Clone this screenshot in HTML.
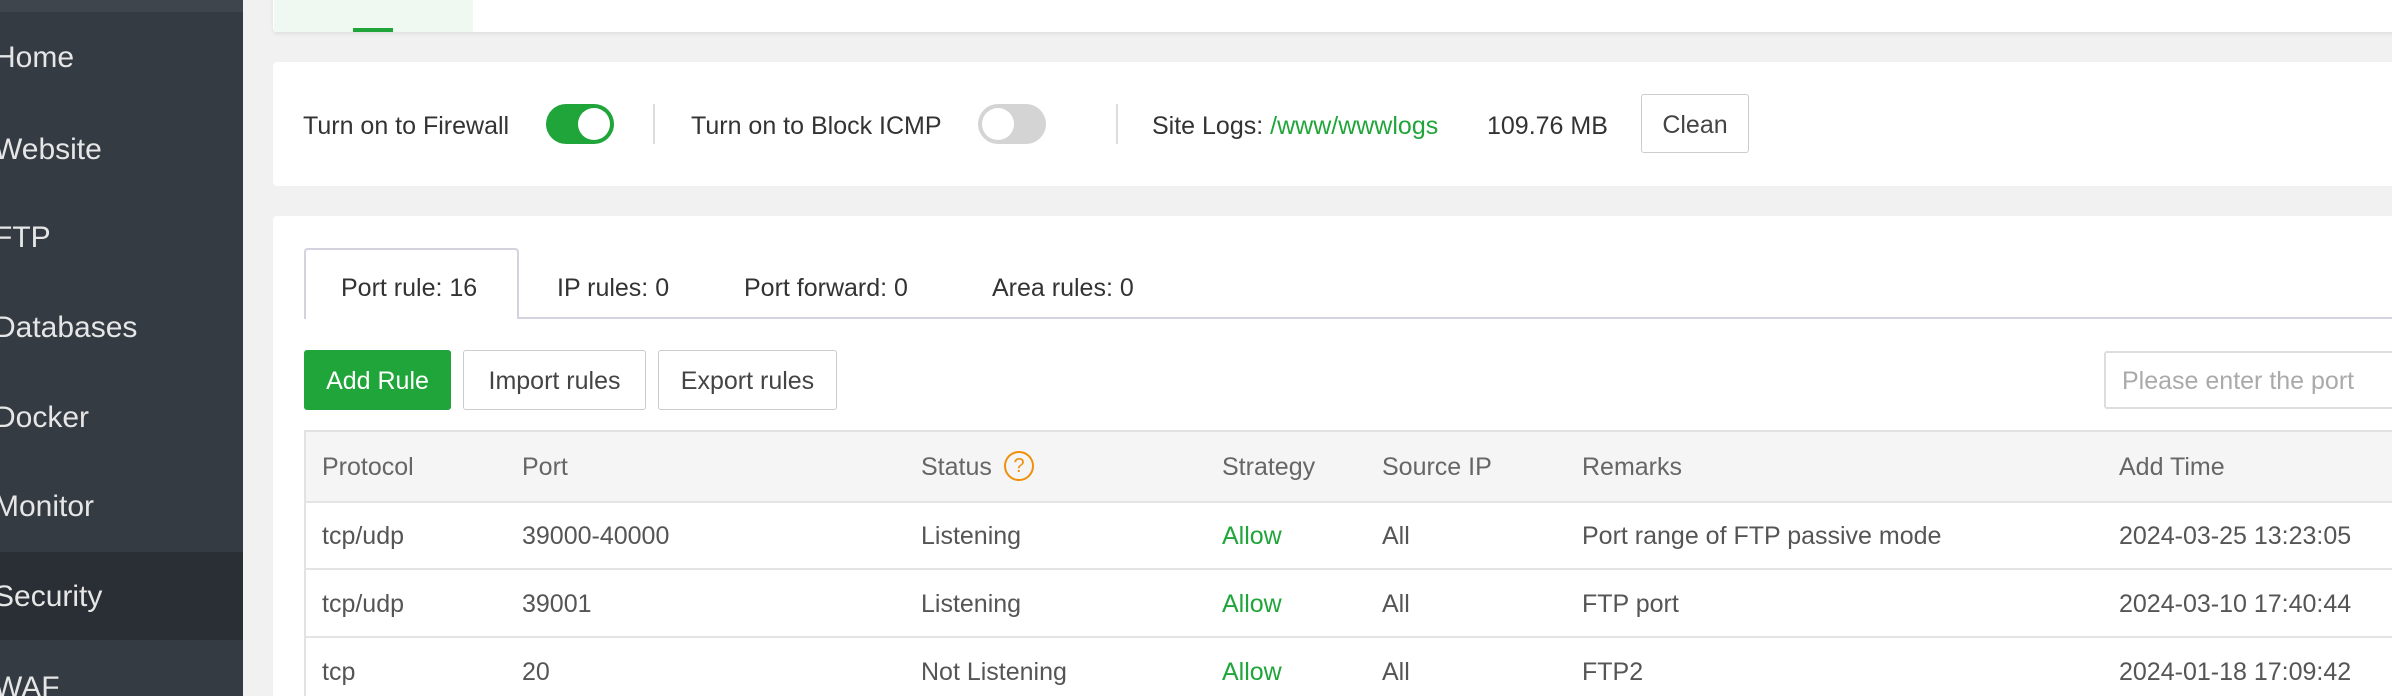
<!DOCTYPE html>
<html><head><meta charset="utf-8"><style>
*{margin:0;padding:0;box-sizing:border-box}
html,body{width:2392px;height:696px;overflow:hidden}
body{background:#f1f1f1;font-family:"Liberation Sans",sans-serif;position:relative;color:#333}
.a{position:absolute;white-space:nowrap}
.side{left:0;top:0;width:243px;height:696px;background:#343b42}
.side .it{position:absolute;left:-6px;font-size:30px;color:#e6e6e6;line-height:32px}
.card{background:#fff;border-radius:4px}
.t{font-size:25px;line-height:28px}
.tog{width:68px;height:40px;border-radius:20px}
.knob{position:absolute;top:4px;width:32px;height:32px;border-radius:50%;background:#fff}
.btn{border:1px solid #ccc;border-radius:3px;background:#fff;font-size:25px;color:#444;text-align:center}
.th{font-size:25px;color:#666;line-height:28px}
.td{font-size:25px;color:#555;line-height:28px}
.hl{height:2px;background:#e4e4e4;left:304px;right:0}
</style></head><body>
<div class="a side">
  <div class="a" style="left:0;top:0;width:243px;height:12px;background:#3e454c"></div>
  <div class="a" style="left:0;top:552px;width:243px;height:88px;background:#2a2f35"></div>
  <div class="it" style="top:42px">Home</div>
  <div class="it" style="top:134px">Website</div>
  <div class="it" style="top:222px">FTP</div>
  <div class="it" style="top:312px">Databases</div>
  <div class="it" style="top:402px">Docker</div>
  <div class="it" style="top:491px">Monitor</div>
  <div class="it" style="top:581px">Security</div>
  <div class="it" style="top:672px">WAF</div>
</div>

<div class="a card" style="left:273px;top:-10px;width:2130px;height:42px;box-shadow:0 2px 4px rgba(0,0,0,.08)"></div>
<div class="a" style="left:274px;top:0;width:199px;height:32px;background:#eff8f1"></div>
<div class="a" style="left:353px;top:28px;width:40px;height:4px;background:#20a53a"></div>

<div class="a card" style="left:273px;top:62px;width:2130px;height:124px"></div>
<div class="a t" style="left:303px;top:112px;color:#333">Turn on to Firewall</div>
<div class="a tog" style="left:546px;top:104px;background:#20a53a"><div class="knob" style="left:32px"></div></div>
<div class="a" style="left:653px;top:104px;width:2px;height:40px;background:#ddd"></div>
<div class="a t" style="left:691px;top:112px">Turn on to Block ICMP</div>
<div class="a tog" style="left:978px;top:104px;background:#d4d4d4"><div class="knob" style="left:4px"></div></div>
<div class="a" style="left:1116px;top:104px;width:2px;height:40px;background:#ddd"></div>
<div class="a t" style="left:1152px;top:112px">Site Logs: <span style="color:#20a53a">/www/wwwlogs</span></div>
<div class="a t" style="left:1487px;top:112px">109.76 MB</div>
<div class="a btn" style="left:1641px;top:94px;width:108px;height:59px;line-height:60px">Clean</div>

<div class="a card" style="left:273px;top:216px;width:2130px;height:480px;border-radius:4px 4px 0 0"></div>
<div class="a" style="left:304px;top:317px;right:0;height:2px;background:#d3d2de"></div>
<div class="a" style="left:304px;top:248px;width:215px;height:71px;background:#fff;border:2px solid #d3d2de;border-bottom:none;border-radius:4px 4px 0 0"></div>
<div class="a t" style="left:341px;top:274px;color:#333">Port rule: 16</div>
<div class="a t" style="left:557px;top:274px">IP rules: 0</div>
<div class="a t" style="left:744px;top:274px">Port forward: 0</div>
<div class="a t" style="left:992px;top:274px">Area rules: 0</div>

<div class="a btn" style="left:304px;top:350px;width:147px;height:60px;line-height:60px;background:#20a53a;border-color:#20a53a;color:#fff">Add Rule</div>
<div class="a btn" style="left:463px;top:350px;width:183px;height:60px;line-height:60px">Import rules</div>
<div class="a btn" style="left:658px;top:350px;width:179px;height:60px;line-height:60px">Export rules</div>
<div class="a" style="left:2104px;top:351px;width:300px;height:58px;border:2px solid #ddd;border-radius:3px;background:#fff"></div>
<div class="a t" style="left:2122px;top:367px;color:#aaa">Please enter the port</div>

<div class="a" style="left:304px;top:430px;right:0;height:72px;background:#f5f5f5;border-top:2px solid #e2e2e2;border-left:2px solid #e2e2e2"></div>
<div class="a" style="left:304px;top:502px;width:2px;height:194px;background:#e2e2e2"></div>
<div class="a hl" style="top:501px"></div>
<div class="a hl" style="top:568px"></div>
<div class="a hl" style="top:636px"></div>

<div class="a th" style="left:322px;top:453px">Protocol</div>
<div class="a th" style="left:522px;top:453px">Port</div>
<div class="a th" style="left:921px;top:453px">Status</div>
<div class="a" style="left:1004px;top:451px;width:30px;height:30px;border:2px solid #f0900a;border-radius:50%;color:#f0900a;font-size:20px;text-align:center;line-height:26px">?</div>
<div class="a th" style="left:1222px;top:453px">Strategy</div>
<div class="a th" style="left:1382px;top:453px">Source IP</div>
<div class="a th" style="left:1582px;top:453px">Remarks</div>
<div class="a th" style="left:2119px;top:453px">Add Time</div>

<div class="a td" style="left:322px;top:522px">tcp/udp</div>
<div class="a td" style="left:522px;top:522px">39000-40000</div>
<div class="a td" style="left:921px;top:522px">Listening</div>
<div class="a td" style="left:1222px;top:522px;color:#20a53a">Allow</div>
<div class="a td" style="left:1382px;top:522px">All</div>
<div class="a td" style="left:1582px;top:522px">Port range of FTP passive mode</div>
<div class="a td" style="left:2119px;top:522px">2024-03-25 13:23:05</div>

<div class="a td" style="left:322px;top:590px">tcp/udp</div>
<div class="a td" style="left:522px;top:590px">39001</div>
<div class="a td" style="left:921px;top:590px">Listening</div>
<div class="a td" style="left:1222px;top:590px;color:#20a53a">Allow</div>
<div class="a td" style="left:1382px;top:590px">All</div>
<div class="a td" style="left:1582px;top:590px">FTP port</div>
<div class="a td" style="left:2119px;top:590px">2024-03-10 17:40:44</div>

<div class="a td" style="left:322px;top:658px">tcp</div>
<div class="a td" style="left:522px;top:658px">20</div>
<div class="a td" style="left:921px;top:658px">Not Listening</div>
<div class="a td" style="left:1222px;top:658px;color:#20a53a">Allow</div>
<div class="a td" style="left:1382px;top:658px">All</div>
<div class="a td" style="left:1582px;top:658px">FTP2</div>
<div class="a td" style="left:2119px;top:658px">2024-01-18 17:09:42</div>
</body></html>
